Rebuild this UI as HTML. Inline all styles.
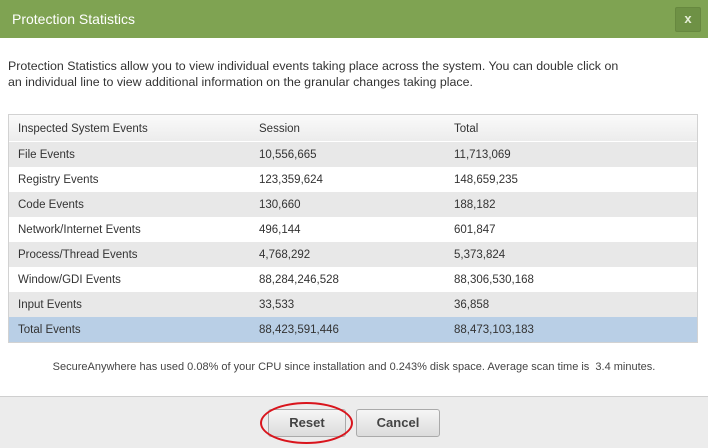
<!DOCTYPE html>
<html><head><meta charset="utf-8"><style>
*{margin:0;padding:0;box-sizing:border-box}
body{width:708px;height:448px;overflow:hidden;background:#fff;font-family:"Liberation Sans",Tahoma,sans-serif;font-size:12px;color:#333;position:relative}
.title{position:absolute;left:0;top:0;width:708px;height:38px;background:#7fa352;color:#fff;font-size:14px;padding:11px 0 0 12px}
.close{position:absolute;left:675px;top:7px;width:26px;height:25px;background:#6e9145;border:1px solid #67883f;border-radius:2px;color:#e6efd8;font-weight:bold;font-size:13px;text-align:center;line-height:22px}
.desc{position:absolute;left:8px;top:58px;line-height:16px;width:700px;font-size:12.4px}
.tbl{position:absolute;left:8px;top:114px;width:690px;border:1px solid #d2d2d2}
.row{height:25px;line-height:25px;position:relative;font-size:11.5px}
.row span{position:absolute;top:1px}
.c1{left:9px}.c2{left:250px}.c3{left:445px}
.hd{height:27px;line-height:27px;background:linear-gradient(#fafafa,#ececec);border-bottom:1px solid #fff}
.g{background:#e8e8e8}.w{background:#fff}.b{background:#b9cfe6}
.foot{position:absolute;left:0;width:708px;top:361px;text-align:center;font-size:11px;color:#444}
.bar{position:absolute;left:0;top:396px;width:708px;height:52px;background:#ececec;border-top:1px solid #cfcfcf}
.btn{position:absolute;top:409px;height:28px;border:1px solid #aaa;border-radius:3px;background:linear-gradient(#f6f6f6,#dcdcdc);font-weight:bold;font-size:13px;color:#444;text-align:center;line-height:26px}
.ring{position:absolute;left:260px;top:402px;width:93px;height:42px;border:2px solid #d9141c;border-radius:50%}
</style></head><body>
<div class="title">Protection Statistics</div>
<div class="close">x</div>
<div class="desc">Protection Statistics allow you to view individual events taking place across the system. You can double click on<br>an individual line to view additional information on the granular changes taking place.</div>
<div class="tbl">
<div class="row hd"><span class="c1">Inspected System Events</span><span class="c2">Session</span><span class="c3">Total</span></div>
<div class="row g"><span class="c1">File Events</span><span class="c2">10,556,665</span><span class="c3">11,713,069</span></div>
<div class="row w"><span class="c1">Registry Events</span><span class="c2">123,359,624</span><span class="c3">148,659,235</span></div>
<div class="row g"><span class="c1">Code Events</span><span class="c2">130,660</span><span class="c3">188,182</span></div>
<div class="row w"><span class="c1">Network/Internet Events</span><span class="c2">496,144</span><span class="c3">601,847</span></div>
<div class="row g"><span class="c1">Process/Thread Events</span><span class="c2">4,768,292</span><span class="c3">5,373,824</span></div>
<div class="row w"><span class="c1">Window/GDI Events</span><span class="c2">88,284,246,528</span><span class="c3">88,306,530,168</span></div>
<div class="row g"><span class="c1">Input Events</span><span class="c2">33,533</span><span class="c3">36,858</span></div>
<div class="row b"><span class="c1">Total Events</span><span class="c2">88,423,591,446</span><span class="c3">88,473,103,183</span></div>
</div>
<div class="foot">SecureAnywhere has used 0.08% of your CPU since installation and 0.243% disk space. Average scan time is &nbsp;3.4 minutes.</div>
<div class="bar"></div>
<div class="btn" style="left:268px;width:78px">Reset</div>
<div class="btn" style="left:356px;width:84px">Cancel</div>
<div class="ring"></div>
</body></html>
